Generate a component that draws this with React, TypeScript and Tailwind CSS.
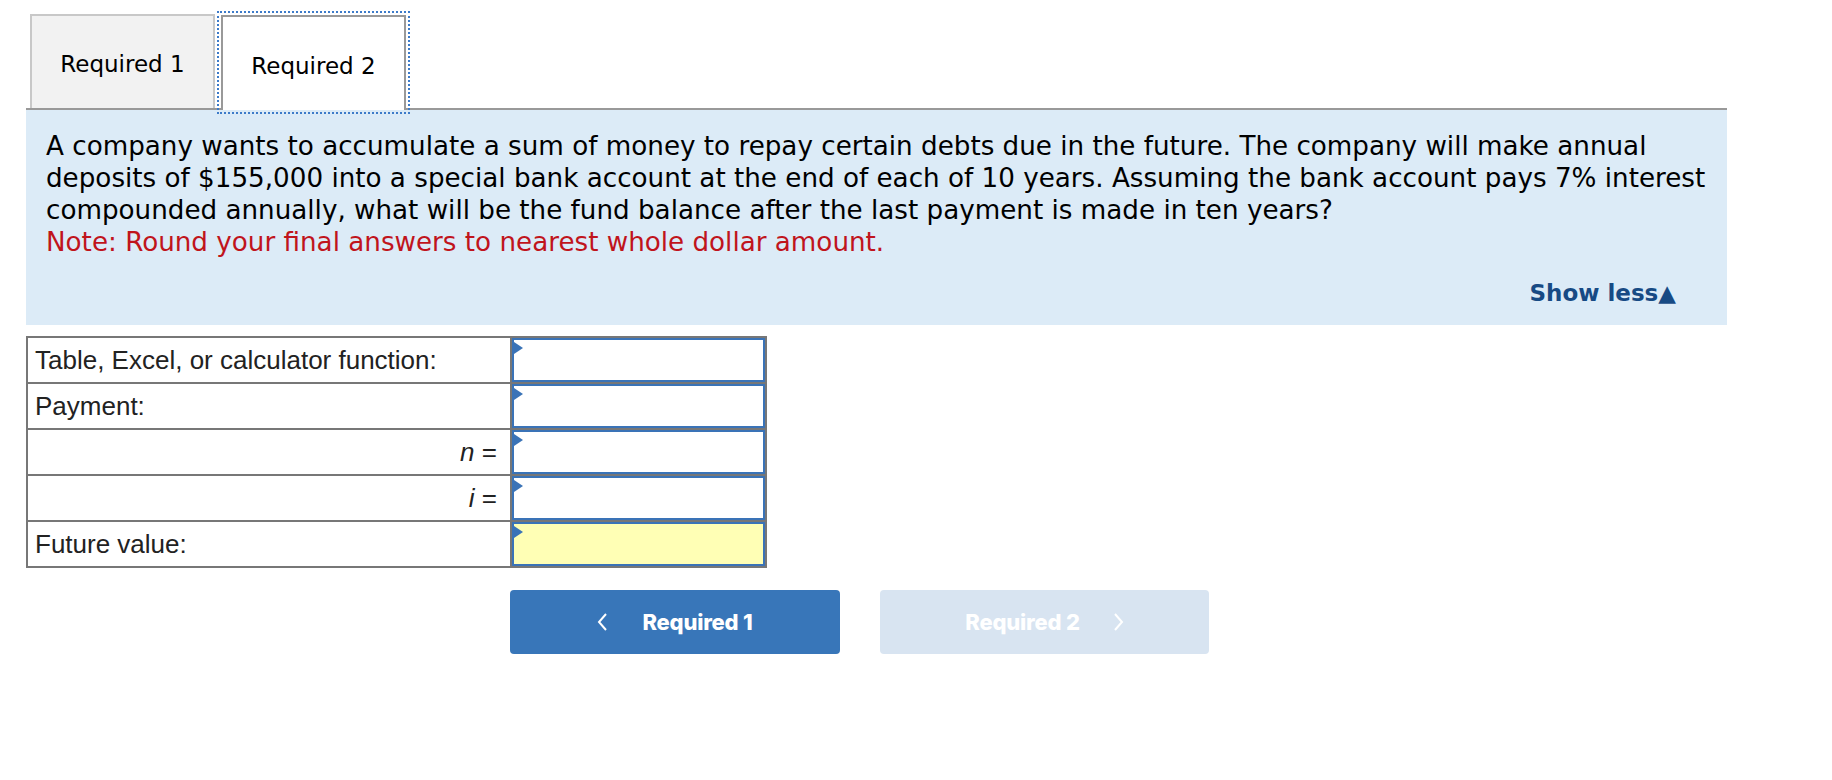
function Marker() {
  return (
    <svg className="absolute left-0 top-[2px]" width="10" height="12" viewBox="0 0 10 12">
      <polygon points="0,0 9,6 0,12" fill="#3a73b7" />
    </svg>
  );
}

function InputCell({ yellow }: { yellow?: boolean }) {
  return (
    <div className={`relative border-2 border-[#3a73b7] ${yellow ? "bg-[#ffffb5]" : "bg-white"}`}>
      <Marker />
    </div>
  );
}

const rows = [
  { label: "Table, Excel, or calculator function:", right: false },
  { label: "Payment:", right: false },
  { label: "n", right: true },
  { label: "i", right: true },
  { label: "Future value:", right: false },
];

export default function App() {
  return (
    <div className="w-[1832px] h-[780px] bg-white text-black font-['DejaVu_Sans',sans-serif]">
      <div className="w-[1701px] ml-[26px] pt-[14px]">
        {/* tabs */}
        <div className="flex items-end pl-[4px] border-b-2 border-[#999]">
          <div className="w-[185px] h-[94px] pt-[5px] flex items-center justify-center bg-[#f2f2f2] border-2 border-b-0 border-[#c8c8c8] text-[23px]">
            Required 1
          </div>
          <div className="ml-[6px] -mb-[2px] w-[185px] h-[95px] pt-[5px] flex items-center justify-center bg-white border-2 border-b-0 border-[#999] outline-2 outline-dotted outline-[#3d7bc9] outline-offset-[2px] text-[23px]">
            Required 2
          </div>
        </div>

        {/* question */}
        <div className="bg-[#dcebf7] pl-[20px] pr-[12px] pt-[20px] pb-[16px]">
          <p className="text-[26.2px] leading-[32px]">
            A company wants to accumulate a sum of money to repay certain debts due in the future. The company will make annual deposits of $155,000 into a special bank account at the end of each of 10 years. Assuming the bank account pays 7% interest compounded annually, what will be the fund balance after the last payment is made in ten years?
          </p>
          <p className="text-[26.2px] leading-[32px] text-[#c0141c]">
            Note: Round your final answers to nearest whole dollar amount.
          </p>
          <div className="flex justify-end mt-[19px] pr-[39px]">
            <span className="text-[23px] leading-[32px] font-bold text-[#174a84]">Show less▲</span>
          </div>
        </div>

        {/* answer table */}
        <div className="mt-[11px] w-fit grid grid-cols-[482px_253px] auto-rows-[44px] gap-[2px] p-[2px] bg-[#777] font-['Liberation_Sans',Arial,sans-serif] text-[26px] text-[#222]">
          {rows.map((r, i) => (
            <div key={i} className="contents">
              {r.right ? (
                <div className="bg-white flex items-center justify-end pr-[13px]">
                  <span><i>{r.label}</i> =</span>
                </div>
              ) : (
                <div className="bg-white flex items-center pl-[7px]">{r.label}</div>
              )}
              <InputCell yellow={i === 4} />
            </div>
          ))}
        </div>

        {/* nav buttons */}
        <div className="flex gap-[40px] pl-[484px] mt-[22px] font-['Inter',sans-serif] text-[22px] font-extrabold tracking-[-0.2px] text-white">
          <button className="w-[330px] h-[64px] rounded-[4px] bg-[#3876b9] flex items-center justify-center gap-[34px]">
            <svg width="11" height="18" viewBox="0 0 11 18" fill="none">
              <polyline points="9,1 2,9 9,17" stroke="white" strokeWidth="2" />
            </svg>
            <span>Required 1</span>
          </button>
          <button className="w-[329px] h-[64px] rounded-[4px] bg-[#d8e4f1] flex items-center justify-center gap-[33px]">
            <span>Required 2</span>
            <svg width="11" height="18" viewBox="0 0 11 18" fill="none">
              <polyline points="2,1 9,9 2,17" stroke="white" strokeWidth="2" />
            </svg>
          </button>
        </div>
      </div>
    </div>
  );
}
